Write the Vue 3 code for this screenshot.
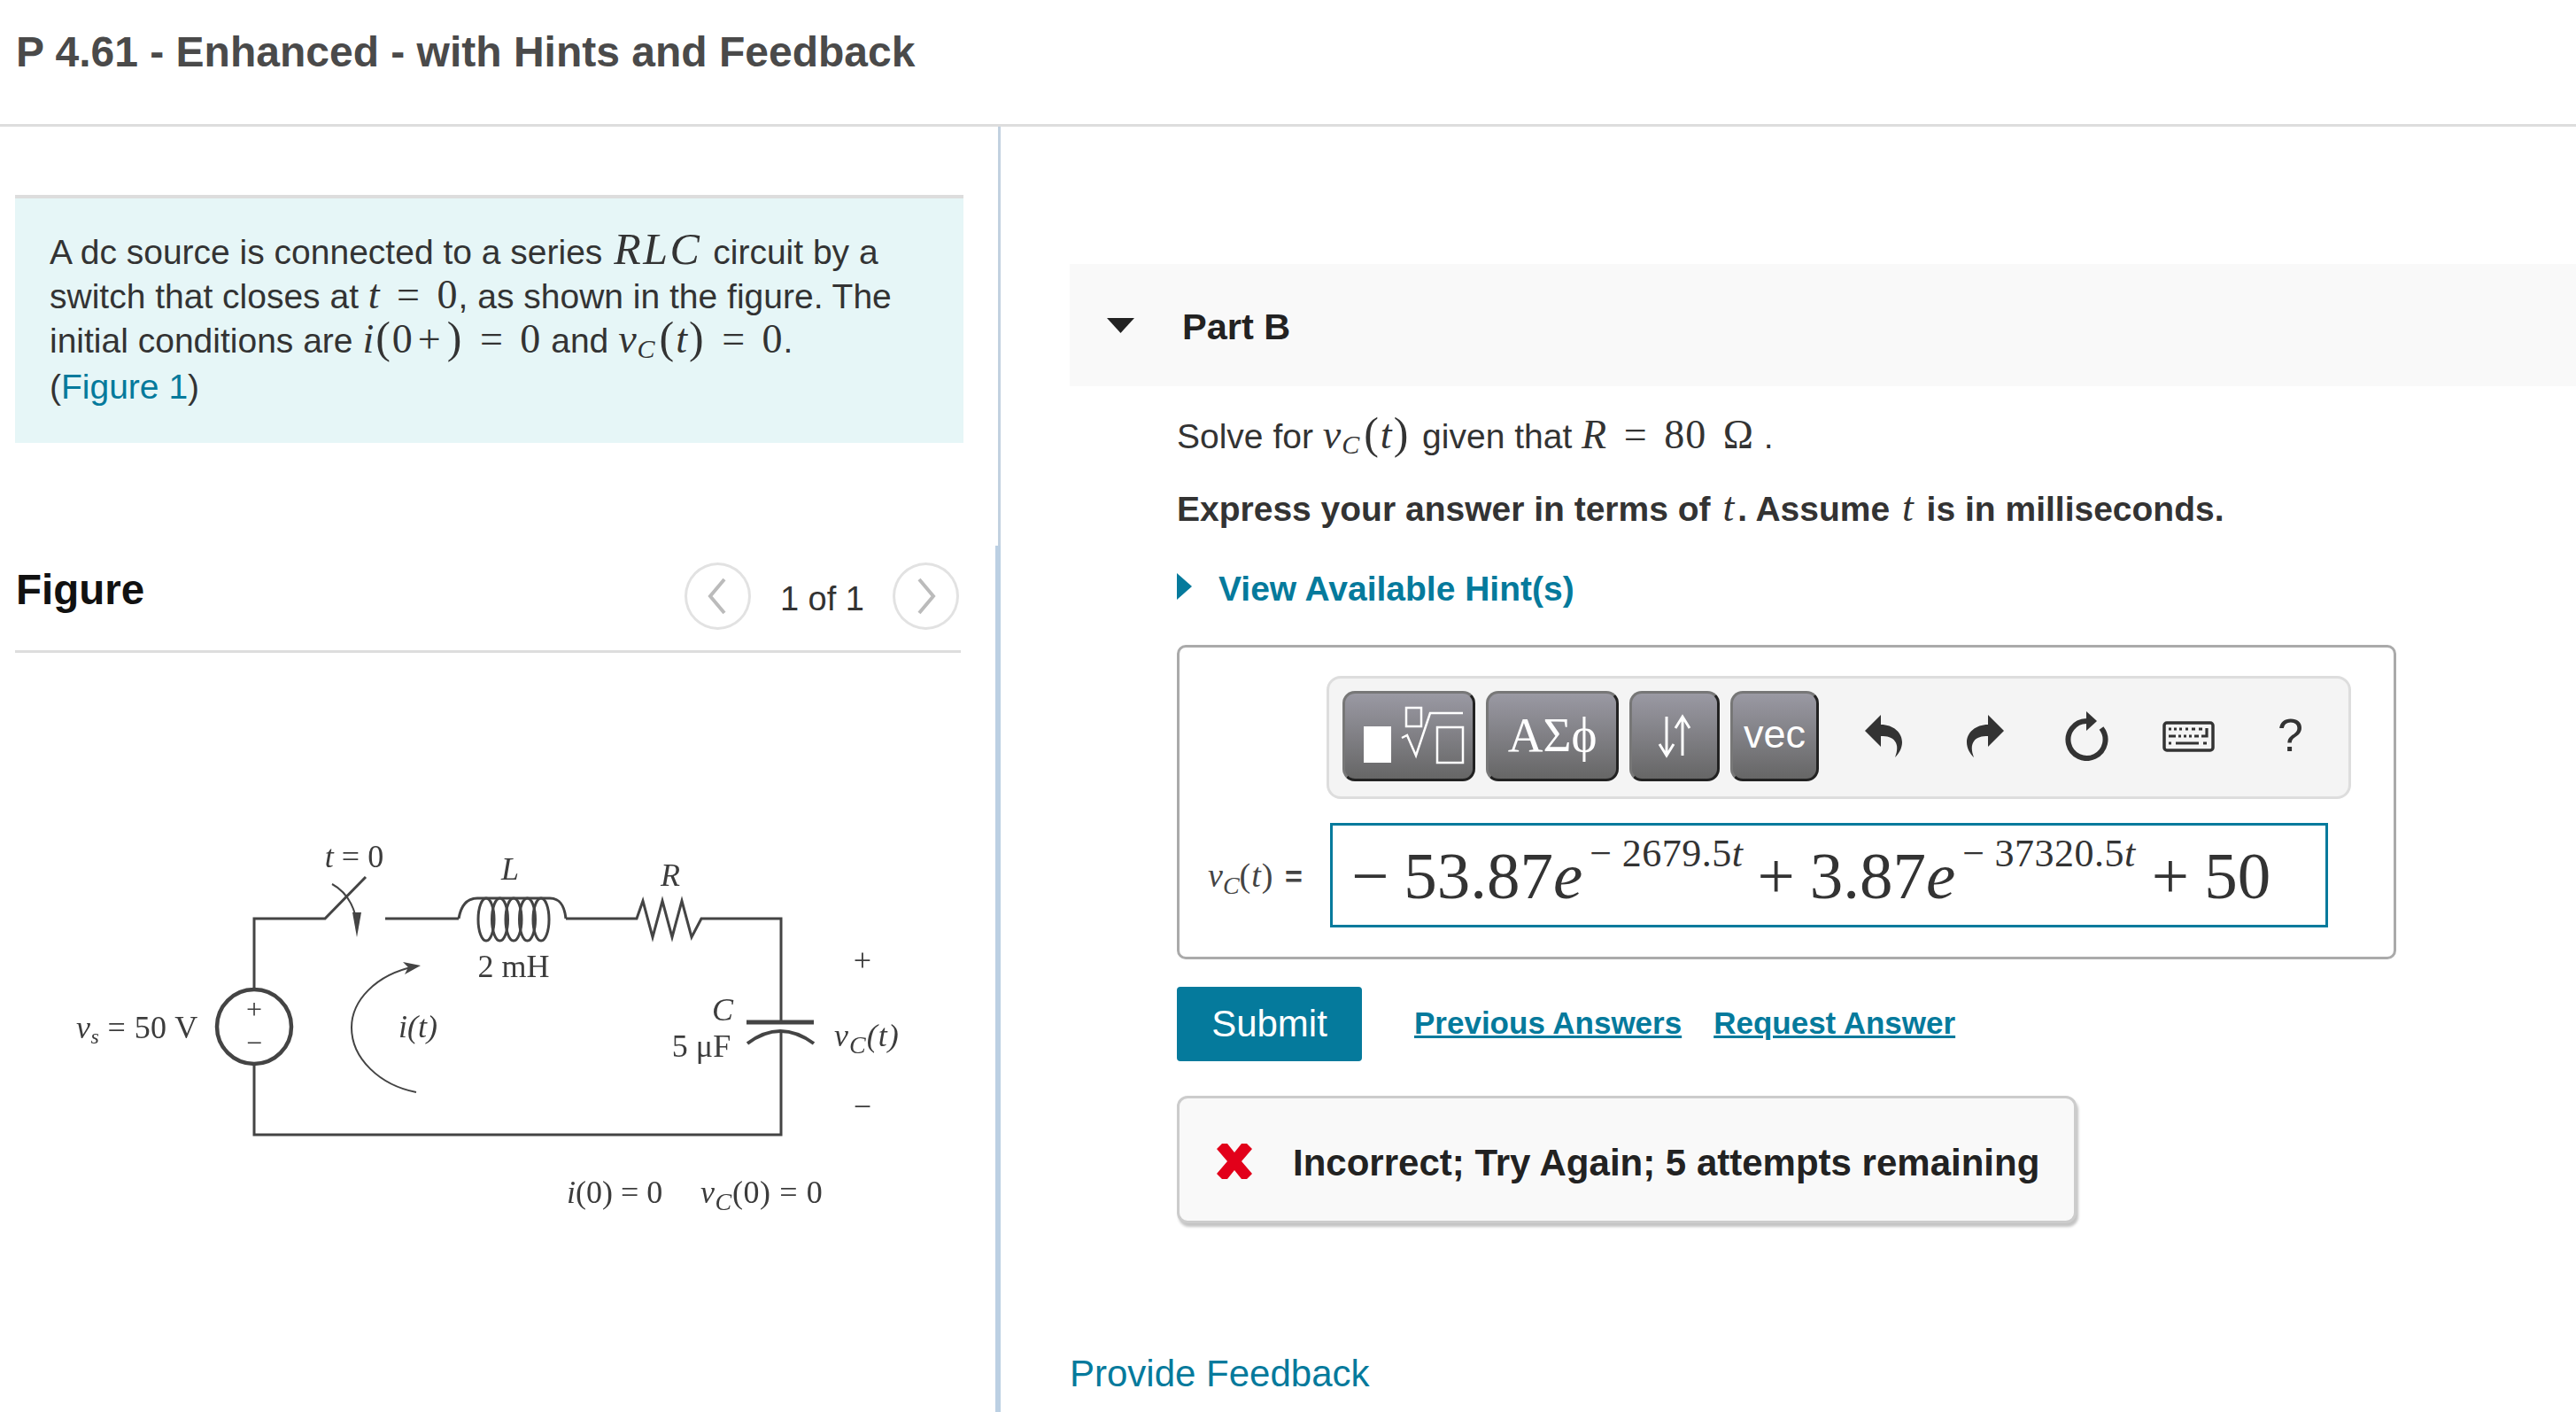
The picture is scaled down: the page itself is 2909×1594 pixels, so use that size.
<script setup>
const teal = '#057a9c'
const coilLoops = [0, 1, 2, 3, 4]
</script>

<template>
  <div class="page">
    <header class="top"><h1>P 4.61 - Enhanced - with Hints and Feedback</h1></header>
    <div class="main">
      <section class="left">
        <div class="info">
          A dc source is connected to a series <span class="m big"><i>RLC</i></span> circuit by a<br />
          switch that closes at <span class="m"><i>t</i> = 0</span>, as shown in the figure. The<br />
          initial conditions are <span class="m"><i>i</i><span class="par">(</span>0<span class="pl">+</span><span class="par">)</span> = 0</span> and <span class="m"><i>v</i><sub><i>C</i></sub><span class="par">(</span><i>t</i><span class="par">)</span> = 0</span>.<br />
          <span class="figline">(<a class="lnk">Figure 1</a>)</span>
        </div>
        <div class="fighead">
          <h2>Figure</h2>
          <div class="pager">
            <span class="circle"><svg width="24" height="44" viewBox="0 0 24 44"><path d="M20 3 L4 22 L20 41" fill="none" stroke="#bbb" stroke-width="4" /></svg></span>
            <span class="count">1 of 1</span>
            <span class="circle"><svg width="24" height="44" viewBox="0 0 24 44"><path d="M4 3 L20 22 L4 41" fill="none" stroke="#bbb" stroke-width="4" /></svg></span>
          </div>
        </div>
        <svg class="circuit" width="1067" height="700" viewBox="18 737 1067 700">
          <g fill="none" stroke="#444" stroke-width="3">
            <path d="M288 1116 V1037 H368 L414 990" />
            <path d="M376 998 Q398 1010 404 1040" stroke-width="2" />
            <path d="M436 1037 H519" />
            <path d="M519 1037 C522 1020 530 1014 540 1014 H622 C632 1014 638 1020 640 1037" />
            <ellipse v-for="n in coilLoops" :key="n" :cx="550 + n * 15.5" cy="1038" rx="9" ry="24" />
            <path d="M640 1037 H720 L727 1017 L738 1058 L749 1017 L760 1058 L771 1017 L782 1058 L793 1037 H883 V1154" />
            <path d="M883 1165 V1281 H288 V1202" />
            <circle cx="288" cy="1159" r="42" stroke-width="4.5" />
            <path d="M844 1154 H920" stroke-width="5" />
            <path d="M845 1178 Q882 1150 920 1178" stroke-width="4" />
            <path d="M471 1233 C430 1225 398 1195 398 1160 C398 1130 425 1100 470 1091" stroke-width="2" />
          </g>
          <path d="M404 1058 L399 1030 L409 1030 Z" fill="#444" />
          <path d="M476 1090 L456 1086 L462 1092 L458 1100 Z" fill="#444" />
          <g class="ctext">
            <text x="401" y="979" text-anchor="middle"><tspan font-style="italic">t</tspan> = 0</text>
            <text x="577" y="993" text-anchor="middle" font-style="italic">L</text>
            <text x="758" y="1000" text-anchor="middle" font-style="italic">R</text>
            <text x="581" y="1103" text-anchor="middle">2 mH</text>
            <text x="975" y="1096" text-anchor="middle">+</text>
            <text x="975" y="1261" text-anchor="middle">−</text>
            <text x="288" y="1150" text-anchor="middle" font-size="32">+</text>
            <text x="288" y="1188" text-anchor="middle" font-size="32">−</text>
            <text x="817" y="1152" text-anchor="middle" font-style="italic">C</text>
            <text x="793" y="1193" text-anchor="middle">5 μF</text>
            <text x="943" y="1181" font-style="italic" letter-spacing="1">v<tspan dy="8" font-size="28">C</tspan><tspan dy="-8">(t)</tspan></text>
            <text x="473" y="1171" text-anchor="middle" font-style="italic">i(t)</text>
            <text x="87" y="1172" letter-spacing="0.4"><tspan font-style="italic">v<tspan dy="6" font-size="24">s</tspan></tspan><tspan dy="-6"> = 50 V</tspan></text>
            <text x="641" y="1358"><tspan font-style="italic">i</tspan>(0) = 0</text>
            <text x="792" y="1358" letter-spacing="0.6"><tspan font-style="italic">v<tspan dy="8" font-size="28">C</tspan></tspan><tspan dy="-8">(0) = 0</tspan></text>
          </g>
        </svg>
      </section>

      <section class="right">
        <div class="partbar">
          <svg class="tri" width="31" height="17" viewBox="0 0 31 17"><path d="M0 0 H31 L15.5 17 Z" fill="#222" /></svg>
          <span>Part B</span>
        </div>
        <div class="content">
          <p class="solve">Solve for <span class="m"><i>v</i><sub><i>C</i></sub><span class="par">(</span><i>t</i><span class="par">)</span></span><span class="gap"> given that </span><span class="m"><i>R</i> = 80 Ω</span> .</p>
          <p class="express">Express your answer in terms of <span class="m t"><i>t</i></span>. Assume <span class="m t"><i>t</i></span> is in milliseconds.</p>
          <div class="hint">
            <svg width="17" height="30" viewBox="0 0 17 30"><path d="M0 0 L17 15 L0 30 Z" :fill="teal" /></svg>
            <a>View Available Hint(s)</a>
          </div>

          <div class="answer">
            <div class="toolbar">
              <div class="tbtn w149">
                <svg width="149" height="102" viewBox="1516 780 149 102">
                  <rect x="1539" y="820" width="31" height="41" fill="#fff" />
                  <g fill="none" stroke="#fff" stroke-width="2.5">
                    <rect x="1587" y="799" width="17" height="21" />
                    <rect x="1622" y="821" width="29" height="40" />
                    <path d="M1582 833 L1588 830 L1598 853 L1614 805 H1651" />
                  </g>
                </svg>
              </div>
              <div class="tbtn w149"><span class="greek">ΑΣϕ</span></div>
              <div class="tbtn w102">
                <svg width="40" height="50" viewBox="0 0 40 50" fill="none" stroke="#fff" stroke-width="3">
                  <path d="M11 3 V46 M3 34 L11 47 L19 34" />
                  <path d="M29 47 V4 M21 16 L29 3 L37 16" />
                </svg>
              </div>
              <div class="tbtn w100"><span class="vec">vec</span></div>

              <div class="tools">
                <span class="slot">
                  <svg width="42" height="48" viewBox="0 0 42 48"><path d="M0 18 L18 0 V11 C32 11 42 20 42 31 C42 38 38 44 34 48 C37 40 37 34 34 30 C31 25 25 24 18 24 V36 Z" fill="#333" /></svg>
                </span>
                <span class="slot">
                  <svg width="42" height="48" viewBox="0 0 42 48"><path transform="matrix(-1 0 0 1 42 0)" d="M0 18 L18 0 V11 C32 11 42 20 42 31 C42 38 38 44 34 48 C37 40 37 34 34 30 C31 25 25 24 18 24 V36 Z" fill="#333" /></svg>
                </span>
                <span class="slot">
                  <svg width="50" height="56" viewBox="2334 803 50 56"><path d="M2358 814 A21 21 0 1 0 2375 822" fill="none" stroke="#333" stroke-width="6" /><path d="M2358 803 L2370 814 L2358 825 Z" fill="#333" /></svg>
                </span>
                <span class="slot">
                  <svg width="59" height="35" viewBox="0 0 59 35">
                    <rect x="2" y="2" width="55" height="31" rx="3" fill="none" stroke="#333" stroke-width="3.5" />
                    <path d="M7 9 h3 M13 9 h3 M19 9 h3 M26 9 h3 M33 9 h4 M41 9 h4 M7 17 h8 M18 17 h3 M24 17 h3 M30 17 h3 M36 17 h5 M44 17 h6 V8 M7 25 h3 M15 25 h26 M46 25 h4" stroke="#333" stroke-width="3.2" fill="none" />
                  </svg>
                </span>
                <span class="slot qm">?</span>
              </div>
            </div>

            <div class="mathrow">
              <label class="vlabel"><i>v</i><sub><i>C</i></sub><span class="lp">(<i>t</i>)</span><span class="eq"> =</span></label>
              <div class="input">
                <span class="op first">−</span><span class="num">53.87<i>e</i></span><span class="sup"><span class="sm">−</span>2679.5<i>t</i></span><span class="op plus1">+</span><span class="num">3.87<i>e</i></span><span class="sup"><span class="sm">−</span>37320.5<i>t</i></span><span class="op plus2">+</span><span class="num">50</span>
              </div>
            </div>
          </div>

          <div class="actions">
            <button class="submit">Submit</button>
            <a class="act prev">Previous Answers</a>
            <a class="act">Request Answer</a>
          </div>

          <div class="feedback">
            <svg width="40" height="40" viewBox="0 0 40 40"><path d="M0 6 L6 0 H12 L20 10 L28 0 H34 L40 6 L28 20 L40 34 L34 40 H28 L20 30 L12 40 H6 L0 34 L12 20 Z" fill="#e2001a" /></svg>
            <span>Incorrect; Try Again; 5 attempts remaining</span>
          </div>
        </div>
        <a class="provide">Provide Feedback</a>
      </section>
    </div>
  </div>
</template>

<style>
html, body { margin: 0; background: #fff; overflow: hidden; }
</style>

<style scoped>
* { box-sizing: border-box; }
.page {
  width: 2909px;
  height: 1594px;
  font-family: "Liberation Sans", Arial, sans-serif;
  font-size: 39px;
  line-height: 50px;
  color: #333;
  background: #fff;
  overflow: hidden;
}
.top {
  height: 143px;
  border-bottom: 3px solid #ddd;
  padding: 32px 0 0 18px;
}
h1 {
  margin: 0;
  font-size: 48px;
  line-height: 54px;
  font-weight: 700;
  color: #4a4a4a;
}
.main { display: flex; height: 1451px; }
.left {
  position: relative;
  width: 1130px;
  flex: none;
  border-right: 3px solid #c2d1e0;
  padding: 77px 0 0 17px;
}
.left::after {
  content: "";
  position: absolute;
  right: -3px;
  top: 473px;
  bottom: 0;
  width: 6px;
  background: #bcd0e3;
}
.info {
  width: 1071px;
  height: 280px;
  background: #e6f6f7;
  border-top: 4px solid #ddd;
  padding: 36px 0 0 39px;
  white-space: nowrap;
}
.figline { position: relative; top: 2px; }
.m {
  font-family: "Liberation Serif", serif;
  font-size: 46px;
  line-height: 0;
  letter-spacing: 1px;
  word-spacing: 6px;
  font-weight: 400;
  color: #333;
}
.m.big { font-size: 50px; letter-spacing: 2.5px; margin: 0 2px; }
.m.t { padding: 0 3px; }
.m sub { font-size: 30px; line-height: 0; vertical-align: -6px; margin-right: 3px; }
.par { font-size: 50px; line-height: 0; padding: 0 1px; }
.pl { padding: 0 5px; }
.gap { margin-left: 3px; }
.lnk { color: #057a9c; }
.fighead {
  width: 1068px;
  height: 237px;
  margin-top: 0;
  border-bottom: 3px solid #ddd;
  padding-top: 136px;
  display: flex;
  justify-content: space-between;
  align-items: flex-start;
}
h2 {
  margin: 0 0 0 1px;
  font-size: 47.5px;
  line-height: 60px;
  color: #111;
}
.pager {
  display: flex;
  align-items: center;
  margin: -1px 2px 0 0;
}
.circle {
  width: 75px;
  height: 76px;
  border: 3px solid #e2e2e2;
  border-radius: 50%;
  display: flex;
  align-items: center;
  justify-content: center;
}
.count { margin: 6px 32px 0 33px; white-space: nowrap; font-size: 38px; }
.circuit { display: block; filter: blur(0.5px); }
.ctext {
  font-family: "Liberation Serif", serif;
  font-size: 36px;
  fill: #3c3c3c;
}
.right { flex: 1; padding: 155px 0 0 78px; min-width: 0; }
.partbar {
  height: 138px;
  background: #f9f9f9;
  display: flex;
  align-items: center;
  font-weight: 700;
  font-size: 41.5px;
  color: #222;
}
.partbar span { margin-top: 3px; }
.tri { margin: 0 54px 0 42px; flex: none; }
.content { padding-left: 121px; }
p { margin: 0; white-space: nowrap; }
.solve { margin-top: 32px; }
.express { margin-top: 32px; font-weight: 700; }
.hint {
  margin-top: 40px;
  display: flex;
  align-items: flex-start;
  color: #057a9c;
  font-weight: 700;
}
.hint svg { margin: 7px 30px 0 0; }
.answer {
  margin-top: 38px;
  width: 1377px;
  height: 355px;
  border: 3px solid #aaa;
  border-radius: 10px;
  padding: 32px 0 0 166px;
}
.toolbar {
  width: 1157px;
  height: 139px;
  background: #f4f4f4;
  border: 3px solid #ddd;
  border-radius: 16px;
  padding: 14px 0 0 15px;
  display: flex;
  gap: 12px;
  align-items: flex-start;
}
.tbtn {
  height: 102px;
  flex: none;
  border-radius: 14px;
  background: linear-gradient(#9a99a3, #666);
  border: 3px solid #777;
  border-right-color: #222;
  border-bottom-color: #222;
  display: flex;
  align-items: center;
  justify-content: center;
  color: #fff;
  position: relative;
  overflow: hidden;
}
.tbtn svg { flex: none; }
.w149 { width: 150px; }
.w102 { width: 102px; }
.w100 { width: 100px; }
.greek { font-family: "Liberation Serif", serif; font-size: 55px; margin-top: -2px; }
.vec { font-size: 45px; margin-top: -4px; }
.tools { display: flex; margin: 0 0 0 3px; height: 102px; align-items: center; }
.slot {
  width: 115px;
  display: flex;
  justify-content: center;
  align-items: center;
}
.qm { font-size: 52px; color: #333; margin-top: -3px; }
.mathrow {
  margin-top: 27px;
  margin-left: -134px;
  display: flex;
  align-items: center;
}
.vlabel {
  width: 138px;
  flex: none;
  font-family: "Liberation Serif", serif;
  font-size: 38px;
  font-weight: 400;
  color: #444;
  white-space: nowrap;
}
.vlabel sub { font-size: 28px; line-height: 0; vertical-align: -8px; }
.lp { letter-spacing: 1px; }
.eq { font-family: "Liberation Sans", sans-serif; font-weight: 700; font-size: 34px; margin-left: 3px; }
.input {
  width: 1127px;
  height: 118px;
  border: 3px solid #057a9c;
  padding: 0 0 0 21px;
  font-family: "Liberation Serif", serif;
  font-size: 75px;
  line-height: 114px;
  color: #333;
  white-space: nowrap;
}
.sup {
  font-size: 44px;
  vertical-align: 36px;
  line-height: 0;
  margin-left: 8px;
  letter-spacing: 0.5px;
}
.sm { margin-right: 11px; }
.op.first { margin-right: 17px; }
.plus1 { margin: 0 17px 0 16px; }
.plus2 { margin: 0 17px 0 18px; }
.actions {
  margin-top: 31px;
  display: flex;
  align-items: center;
}
.submit {
  width: 209px;
  height: 84px;
  background: #057a9c;
  color: #fff;
  border: 0;
  border-radius: 4px;
  font: 400 42px "Liberation Sans", sans-serif;
  padding: 0;
}
.act {
  color: #057a9c;
  font-weight: 700;
  font-size: 35px;
  text-decoration: underline;
  margin: -3px 0 0 36px;
}
.act.prev { margin-left: 59px; }
.feedback {
  margin-top: 39px;
  width: 1016px;
  height: 144px;
  background: #f9f9f9;
  border: 3px solid #ccc;
  border-radius: 12px;
  box-shadow: 2px 4px 3px #c4c4c4;
  display: flex;
  align-items: center;
  padding-left: 42px;
  font-weight: 700;
  font-size: 42px;
  color: #222;
  white-space: nowrap;
}
.feedback svg { margin: 3px 46px 0 0; flex: none; }
.feedback span { margin-top: 8px; }
.provide {
  display: block;
  margin-top: 145px;
  color: #057a9c;
  font-size: 42px;
}
</style>
